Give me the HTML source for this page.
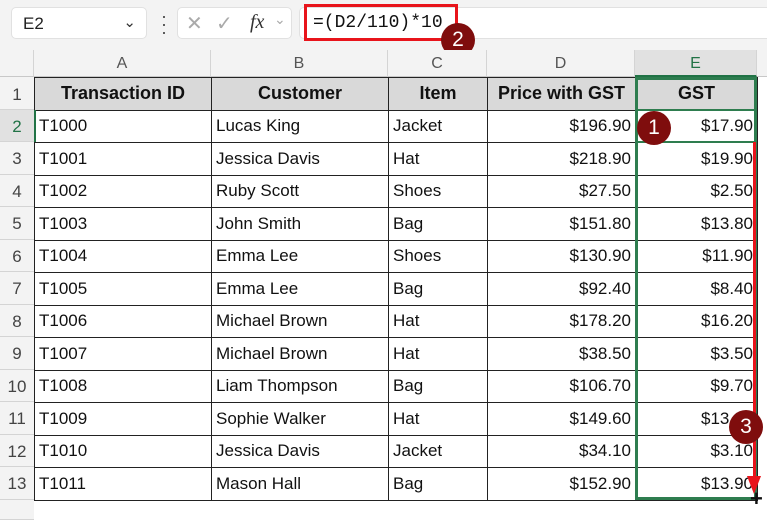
<!DOCTYPE html>
<html><head><style>
*{margin:0;padding:0;box-sizing:border-box}
body{width:767px;height:513px;overflow:hidden;background:#fff;font-family:"Liberation Sans",sans-serif;position:relative}
.top{position:absolute;left:0;top:0;width:767px;height:50px;background:#f3f3f3}
.box{position:absolute;background:#fff;border:1px solid #e1e1e1;border-radius:5px}
.ch{position:absolute;top:50px;height:27px;background:#f3f3f3;border-right:1px solid #d4d4d4;border-bottom:1px solid #c8c8c8;color:#555;font-size:16px;text-align:center;line-height:27px}
.rh{position:absolute;left:0;width:34px;background:#f3f3f3;border-bottom:1px solid #d4d4d4;color:#444;font-size:17px;text-align:center}
table{position:absolute;left:34px;top:77px;border-collapse:collapse;font-size:17px;color:#111}
td{border:1px solid #222;height:32.5px;padding:0 4px;white-space:nowrap}
tr.h td{background:#d9d9d9;font-weight:bold;text-align:center;font-size:18px}
td.r{text-align:right}
.circ{position:absolute;width:34px;height:34px;border-radius:50%;background:#7f0d0d;color:#fff;font-size:21px;text-align:center;line-height:34px}
</style></head><body>
<div class="top"></div>
<div class="box" style="left:11px;top:7px;width:136px;height:32px"><span style="position:absolute;left:11px;top:6px;font-size:17px;color:#222">E2</span><span style="position:absolute;right:10px;top:5px;font-size:15px;color:#333">&#8964;</span></div>
<div style="position:absolute;left:161px;top:12px;font-size:18px;color:#444;line-height:8px">·<br>·<br>·</div>
<div class="box" style="left:177px;top:7px;width:115px;height:32px;color:#aaa;font-size:20px"><span style="position:absolute;left:8px;top:3px">✕</span><span style="position:absolute;left:38px;top:3px">✓</span><span style="position:absolute;left:72px;top:3px;color:#333;font-family:'Liberation Serif',serif;font-style:italic">fx</span><span style="position:absolute;left:96px;top:3px;font-size:14px">&#8964;</span></div>
<div class="box" style="left:299px;top:7px;width:480px;height:32px"></div>
<div style="position:absolute;left:304px;top:4px;width:154px;height:37px;border:3px solid #e8141b"></div>
<div style="position:absolute;left:313px;top:13px;font-family:'Liberation Mono',monospace;font-size:18px;color:#111">=(D2/110)*10</div>
<div class="circ" style="left:441px;top:23px">2</div>

<div class="ch" style="left:0;width:34px"></div>
<div class="ch" style="left:34px;width:177px">A</div>
<div class="ch" style="left:211px;width:177px">B</div>
<div class="ch" style="left:388px;width:99px">C</div>
<div class="ch" style="left:487px;width:148px">D</div>
<div class="ch" style="left:635px;width:122px;background:#e1e1e1;color:#217346;border-bottom:2px solid #217346">E</div>
<div class="ch" style="left:757px;width:10px;border-right:none"></div>

<div class="rh" style="top:77px;height:33px;line-height:36px">1</div>
<div class="rh" style="top:110px;height:32px;line-height:34px;background:#e1e1e1;color:#217346">2</div>
<div class="rh" style="top:142px;height:33px;line-height:34px">3</div>
<div class="rh" style="top:175px;height:32px;line-height:34px">4</div>
<div class="rh" style="top:207px;height:33px;line-height:34px">5</div>
<div class="rh" style="top:240px;height:32px;line-height:34px">6</div>
<div class="rh" style="top:272px;height:33px;line-height:34px">7</div>
<div class="rh" style="top:305px;height:32px;line-height:34px">8</div>
<div class="rh" style="top:337px;height:33px;line-height:34px">9</div>
<div class="rh" style="top:370px;height:32px;line-height:34px">10</div>
<div class="rh" style="top:402px;height:33px;line-height:34px">11</div>
<div class="rh" style="top:435px;height:32px;line-height:34px">12</div>
<div class="rh" style="top:467px;height:33px;line-height:34px">13</div>
<div class="rh" style="top:500px;height:20px;line-height:34px"></div>

<table>
<colgroup><col style="width:177px"><col style="width:177px"><col style="width:99px"><col style="width:148px"><col style="width:122px"></colgroup>
<tr class="h"><td>Transaction ID</td><td>Customer</td><td>Item</td><td>Price with GST</td><td>GST</td></tr>
<tr><td>T1000</td><td>Lucas King</td><td>Jacket</td><td class="r">$196.90</td><td class="r">$17.90</td></tr>
<tr><td>T1001</td><td>Jessica Davis</td><td>Hat</td><td class="r">$218.90</td><td class="r">$19.90</td></tr>
<tr><td>T1002</td><td>Ruby Scott</td><td>Shoes</td><td class="r">$27.50</td><td class="r">$2.50</td></tr>
<tr><td>T1003</td><td>John Smith</td><td>Bag</td><td class="r">$151.80</td><td class="r">$13.80</td></tr>
<tr><td>T1004</td><td>Emma Lee</td><td>Shoes</td><td class="r">$130.90</td><td class="r">$11.90</td></tr>
<tr><td>T1005</td><td>Emma Lee</td><td>Bag</td><td class="r">$92.40</td><td class="r">$8.40</td></tr>
<tr><td>T1006</td><td>Michael Brown</td><td>Hat</td><td class="r">$178.20</td><td class="r">$16.20</td></tr>
<tr><td>T1007</td><td>Michael Brown</td><td>Hat</td><td class="r">$38.50</td><td class="r">$3.50</td></tr>
<tr><td>T1008</td><td>Liam Thompson</td><td>Bag</td><td class="r">$106.70</td><td class="r">$9.70</td></tr>
<tr><td>T1009</td><td>Sophie Walker</td><td>Hat</td><td class="r">$149.60</td><td class="r">$13.60</td></tr>
<tr><td>T1010</td><td>Jessica Davis</td><td>Jacket</td><td class="r">$34.10</td><td class="r">$3.10</td></tr>
<tr><td>T1011</td><td>Mason Hall</td><td>Bag</td><td class="r">$152.90</td><td class="r">$13.90</td></tr>
</table>
<div style="position:absolute;left:34px;top:110px;width:2px;height:32px;background:#217346"></div>
<div style="position:absolute;left:635px;top:77px;width:122px;height:423px;border:3px solid #2e7d4f"></div>
<div style="position:absolute;left:635px;top:109px;width:122px;height:34px;border:2px solid #2e7d4f"></div>
<div class="circ" style="left:637px;top:111px">1</div>
<div style="position:absolute;left:753px;top:142px;width:3px;height:335px;background:#e8141b"></div>
<div style="position:absolute;left:747px;top:476px;width:0;height:0;border-left:7px solid transparent;border-right:7px solid transparent;border-top:18px solid #e8141b"></div>
<div class="circ" style="left:729px;top:410px">3</div>
<div style="position:absolute;left:750px;top:488px;font-size:22px;font-weight:bold;color:#111;line-height:22px">+</div>
</body></html>
